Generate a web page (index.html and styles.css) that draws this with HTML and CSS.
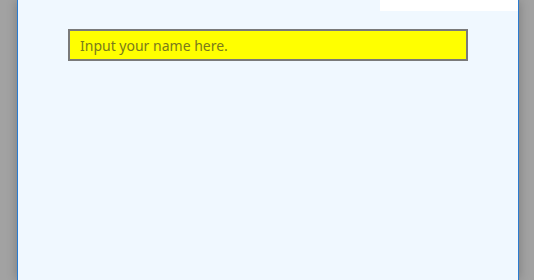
FILE: index.html
```html
<!DOCTYPE html>
<html lang="en">
<head>
    <meta charset="UTF-8">
    <title>Name</title>
    <link rel="stylesheet" href="styles.css">
</head>
<body>
    <div class="page">
        <div class="top-bar">
            <div class="top-box"></div>
        </div>
        <div class="form-row">
            <input class="name-input" type="text" placeholder="Input your name here.">
        </div>
    </div>
</body>
</html>
```
FILE: styles.css
```css
html, body { height: 100%; }
body { margin: 0; background: #a2a2a2; font-family: "Noto Sans", "Open Sans", sans-serif; }
.page {
    width: 500px; height: 100%; margin-left: 17px;
    background: #f0f8ff;
    border-left: 1px solid #2a7bd0; border-right: 1px solid #2a7bd0;
    box-shadow: 0 0 10px rgba(0, 0, 0, 0.25);
}
.top-bar { display: flex; justify-content: flex-end; }
.top-box { width: 138px; height: 11px; background: #fff; }
.form-row { padding: 18px 0 0 50px; }
.name-input {
    display: block; box-sizing: border-box;
    width: 400px; height: 32px; margin: 0;
    padding: 0 10px;
    background: #ffff00; border: 2px solid #7a7a7a; border-radius: 0;
    font-family: "Noto Sans", "Open Sans", sans-serif; font-size: 14px;
    color: #333; outline: none;
}
.name-input::placeholder { color: #7a7a1c; opacity: 1; }
```
